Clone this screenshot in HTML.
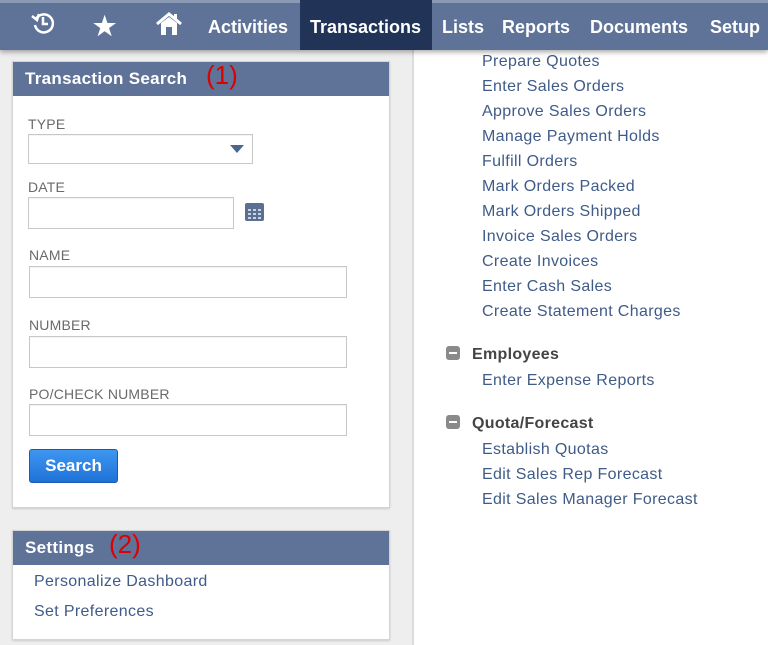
<!DOCTYPE html>
<html><head><style>
*{margin:0;padding:0;box-sizing:border-box}
body{width:768px;height:630px;overflow:hidden;background:#eeeeee;font-family:"Liberation Sans",sans-serif;position:relative}
.a{position:absolute}
.nav{left:0;top:0;width:768px;height:50px;background:#5f7399;border-top:3px solid #8a9ab5;box-shadow:0 2px 5px rgba(0,0,0,.35);z-index:2}
.nav span{position:absolute;top:14px;color:#fff;font-weight:bold;font-size:18px}
.panel{background:#fff;border:1px solid #d4d4d4;box-shadow:0 1px 2px rgba(0,0,0,.15)}
.hdr{background:#5f7399;color:#fff;font-weight:bold;font-size:17px;padding:7px 12px;height:34px;letter-spacing:.3px}
.red{color:#d00;font-weight:normal;font-size:26px;position:absolute;top:-2px;letter-spacing:0}
.lbl{color:#6a6a6a;font-size:14px;letter-spacing:.2px}
.in{border:1px solid #c8c8c8;background:#fff;box-shadow:inset 0 1px 1px rgba(0,0,0,.05)}
.lk{color:#3f5b88;font-size:16px;position:absolute;left:482px;letter-spacing:.35px}
.sec{color:#444;font-weight:bold;font-size:16px;position:absolute;left:472px;letter-spacing:.3px}
.minus{position:absolute;left:446px;width:14px;height:14px;background:#8a8a8a;border-radius:3px}
.minus:after{content:"";position:absolute;left:3px;top:6px;width:8px;height:2px;background:#fff}
</style></head><body>
<div class="a nav">
<svg class="a" style="left:30px;top:7px" width="26" height="26" viewBox="0 0 26 26"><path d="M6 9 A9 9 0 1 1 5 15" fill="none" stroke="#fff" stroke-width="2.5"/><path d="M2 6 L7 10 L9 4" fill="none" stroke="#fff" stroke-width="2.5"/><path d="M13 7 V14 H18" fill="none" stroke="#fff" stroke-width="2.5"/></svg>
<span style="left:93px;top:8px;font-size:26px">★</span>
<svg class="a" style="left:155px;top:8px" width="28" height="26" viewBox="0 0 28 26"><path d="M2 13 L14 3 L26 13" fill="none" stroke="#fff" stroke-width="3"/><path d="M6 12 V24 H22 V12 L14 6 Z" fill="#fff"/><rect x="11" y="16" width="6" height="8" fill="#5f7399"/><rect x="19" y="3" width="3" height="6" fill="#fff"/></svg>
<span style="left:208px">Activities</span>
<div class="a" style="left:300px;top:-3px;width:132px;height:50px;background:#213457"></div>
<span style="left:310px">Transactions</span>
<span style="left:442px">Lists</span>
<span style="left:502px">Reports</span>
<span style="left:590px">Documents</span>
<span style="left:710px">Setup</span>
</div>

<div class="a panel" style="left:12px;top:61px;width:378px;height:447px">
<div class="hdr" style="position:relative">Transaction Search<span class="red" style="left:193px">(1)</span></div>
</div>
<div class="a lbl" style="left:28px;top:116px">TYPE</div>
<div class="a in" style="left:28px;top:134px;width:225px;height:30px"></div>
<div class="a" style="left:230px;top:145px;width:0;height:0;border-left:7px solid transparent;border-right:7px solid transparent;border-top:8px solid #4d6690"></div>
<div class="a lbl" style="left:28px;top:179px">DATE</div>
<div class="a in" style="left:28px;top:197px;width:206px;height:32px"></div>
<svg class="a" style="left:245px;top:203px" width="19" height="18" viewBox="0 0 19 18"><rect x="0" y="0" width="19" height="18" rx="2" fill="#5b6f93"/><g fill="#c8d2e2"><rect x="3" y="6" width="3" height="2"/><rect x="8" y="6" width="3" height="2"/><rect x="13" y="6" width="3" height="2"/><rect x="3" y="10" width="3" height="2"/><rect x="8" y="10" width="3" height="2"/><rect x="13" y="10" width="3" height="2"/><rect x="3" y="14" width="3" height="2"/><rect x="8" y="14" width="3" height="2"/><rect x="13" y="14" width="3" height="2"/></g></svg>
<div class="a lbl" style="left:29px;top:247px">NAME</div>
<div class="a in" style="left:29px;top:266px;width:318px;height:32px"></div>
<div class="a lbl" style="left:29px;top:317px">NUMBER</div>
<div class="a in" style="left:29px;top:336px;width:318px;height:32px"></div>
<div class="a lbl" style="left:29px;top:386px">PO/CHECK NUMBER</div>
<div class="a in" style="left:29px;top:404px;width:318px;height:32px"></div>
<div class="a" style="left:29px;top:449px;width:89px;height:34px;background:linear-gradient(#3f96f0,#1f72d8);border:1px solid #1a5bb0;border-radius:3px;color:#fff;font-weight:bold;font-size:17px;text-align:center;line-height:32px">Search</div>

<div class="a panel" style="left:12px;top:530px;width:378px;height:110px">
<div class="hdr" style="position:relative">Settings<span class="red" style="left:96px">(2)</span></div>
</div>
<div class="a lk" style="left:34px;top:573px">Personalize Dashboard</div>
<div class="a lk" style="left:34px;top:603px">Set Preferences</div>

<div class="a" style="left:412px;top:45px;width:360px;height:600px;background:#fff;border-left:2px solid #dcdcdc"></div>
<div class="lk" style="top:53px">Prepare Quotes</div>
<div class="lk" style="top:78px">Enter Sales Orders</div>
<div class="lk" style="top:103px">Approve Sales Orders</div>
<div class="lk" style="top:128px">Manage Payment Holds</div>
<div class="lk" style="top:153px">Fulfill Orders</div>
<div class="lk" style="top:178px">Mark Orders Packed</div>
<div class="lk" style="top:203px">Mark Orders Shipped</div>
<div class="lk" style="top:228px">Invoice Sales Orders</div>
<div class="lk" style="top:253px">Create Invoices</div>
<div class="lk" style="top:278px">Enter Cash Sales</div>
<div class="lk" style="top:303px">Create Statement Charges</div>
<div class="minus" style="top:346px"></div><div class="sec" style="top:346px">Employees</div>
<div class="lk" style="top:372px">Enter Expense Reports</div>
<div class="minus" style="top:415px"></div><div class="sec" style="top:415px">Quota/Forecast</div>
<div class="lk" style="top:441px">Establish Quotas</div>
<div class="lk" style="top:466px">Edit Sales Rep Forecast</div>
<div class="lk" style="top:491px">Edit Sales Manager Forecast</div>
</body></html>
